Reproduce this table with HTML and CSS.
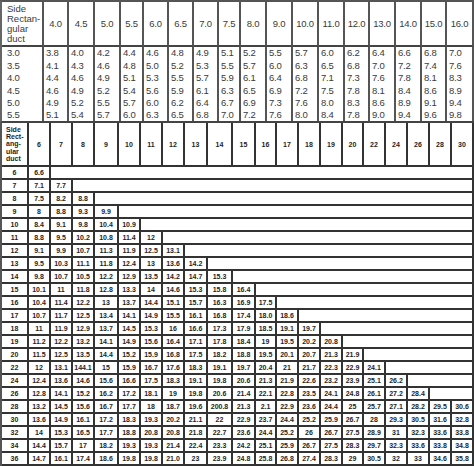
FILE: index.html
```html
<!DOCTYPE html>
<html>
<head>
<meta charset="utf-8">
<link rel="stylesheet" href="styles.css">
</head>
<body>
<div class="top">
  <div class="th lab">Side<br>Rectan-<br>gular<br>duct</div>
  <div class="th">4.0</div><div class="th">4.5</div><div class="th">5.0</div><div class="th">5.5</div><div class="th">6.0</div><div class="th">6.5</div><div class="th">7.0</div><div class="th">7.5</div><div class="th">8.0</div><div class="th">9.0</div><div class="th">10.0</div><div class="th">11.0</div><div class="th">12.0</div><div class="th">13.0</div><div class="th">14.0</div><div class="th">15.0</div><div class="th">16.0</div>

  <div class="td rl">3.0</div><div class="td">3.8</div><div class="td">4.0</div><div class="td">4.2</div><div class="td">4.4</div><div class="td">4.6</div><div class="td">4.8</div><div class="td">4.9</div><div class="td">5.1</div><div class="td">5.2</div><div class="td">5.5</div><div class="td">5.7</div><div class="td">6.0</div><div class="td">6.2</div><div class="td">6.4</div><div class="td">6.6</div><div class="td">6.8</div><div class="td">7.0</div>
  <div class="td rl">3.5</div><div class="td">4.1</div><div class="td">4.3</div><div class="td">4.6</div><div class="td">4.8</div><div class="td">5.0</div><div class="td">5.2</div><div class="td">5.3</div><div class="td">5.5</div><div class="td">5.7</div><div class="td">6.0</div><div class="td">6.3</div><div class="td">6.5</div><div class="td">6.8</div><div class="td">7.0</div><div class="td">7.2</div><div class="td">7.4</div><div class="td">7.6</div>
  <div class="td rl">4.0</div><div class="td">4.4</div><div class="td">4.6</div><div class="td">4.9</div><div class="td">5.1</div><div class="td">5.3</div><div class="td">5.5</div><div class="td">5.7</div><div class="td">5.9</div><div class="td">6.1</div><div class="td">6.4</div><div class="td">6.8</div><div class="td">7.1</div><div class="td">7.3</div><div class="td">7.6</div><div class="td">7.8</div><div class="td">8.1</div><div class="td">8.3</div>
  <div class="td rl">4.5</div><div class="td">4.6</div><div class="td">4.9</div><div class="td">5.2</div><div class="td">5.4</div><div class="td">5.6</div><div class="td">5.9</div><div class="td">6.1</div><div class="td">6.3</div><div class="td">6.5</div><div class="td">6.9</div><div class="td">7.2</div><div class="td">7.5</div><div class="td">7.8</div><div class="td">8.1</div><div class="td">8.4</div><div class="td">8.6</div><div class="td">8.9</div>
  <div class="td rl">5.0</div><div class="td">4.9</div><div class="td">5.2</div><div class="td">5.5</div><div class="td">5.7</div><div class="td">6.0</div><div class="td">6.2</div><div class="td">6.4</div><div class="td">6.7</div><div class="td">6.9</div><div class="td">7.3</div><div class="td">7.6</div><div class="td">8.0</div><div class="td">8.3</div><div class="td">8.6</div><div class="td">8.9</div><div class="td">9.1</div><div class="td">9.4</div>
  <div class="td rl">5.5</div><div class="td">5.1</div><div class="td">5.4</div><div class="td">5.7</div><div class="td">6.0</div><div class="td">6.3</div><div class="td">6.5</div><div class="td">6.8</div><div class="td">7.0</div><div class="td">7.2</div><div class="td">7.6</div><div class="td">8.0</div><div class="td">8.4</div><div class="td">7.8</div><div class="td">9.0</div><div class="td">9.4</div><div class="td">9.6</div><div class="td">9.8</div>
</div>

<div class="bot">
  <div class="bh lab">Side<br>Rect-<br>ang-<br>ular<br>duct</div>
  <div class="bh">6</div><div class="bh">7</div><div class="bh">8</div><div class="bh">9</div><div class="bh">10</div><div class="bh">11</div><div class="bh">12</div><div class="bh">13</div><div class="bh">14</div><div class="bh">15</div><div class="bh">16</div><div class="bh">17</div><div class="bh">18</div><div class="bh">19</div><div class="bh">20</div><div class="bh">22</div><div class="bh">24</div><div class="bh">26</div><div class="bh">28</div><div class="bh">30</div>

  <div class="b">6</div><div class="b">6.6</div><div class="b sp19"></div>
  <div class="b">7</div><div class="b">7.1</div><div class="b">7.7</div><div class="b sp18"></div>
  <div class="b">8</div><div class="b">7.5</div><div class="b">8.2</div><div class="b">8.8</div><div class="b sp17"></div>
  <div class="b">9</div><div class="b">8</div><div class="b">8.8</div><div class="b">9.3</div><div class="b">9.9</div><div class="b sp16"></div>
  <div class="b">10</div><div class="b">8.4</div><div class="b">9.1</div><div class="b">9.8</div><div class="b">10.4</div><div class="b">10.9</div><div class="b sp15"></div>
  <div class="b">11</div><div class="b">8.8</div><div class="b">9.5</div><div class="b">10.2</div><div class="b">10.8</div><div class="b">11.4</div><div class="b">12</div><div class="b sp14"></div>
  <div class="b">12</div><div class="b">9.1</div><div class="b">9.9</div><div class="b">10.7</div><div class="b">11.3</div><div class="b">11.9</div><div class="b">12.5</div><div class="b">13.1</div><div class="b sp13"></div>
  <div class="b">13</div><div class="b">9.5</div><div class="b">10.3</div><div class="b">11.1</div><div class="b">11.8</div><div class="b">12.4</div><div class="b">13</div><div class="b">13.6</div><div class="b">14.2</div><div class="b sp12"></div>
  <div class="b">14</div><div class="b">9.8</div><div class="b">10.7</div><div class="b">10.5</div><div class="b">12.2</div><div class="b">12.9</div><div class="b">13.5</div><div class="b">14.2</div><div class="b">14.7</div><div class="b">15.3</div><div class="b sp11"></div>
  <div class="b">15</div><div class="b">10.1</div><div class="b">11</div><div class="b">11.8</div><div class="b">12.8</div><div class="b">13.3</div><div class="b">14</div><div class="b">14.6</div><div class="b">15.3</div><div class="b">15.8</div><div class="b">16.4</div><div class="b sp10"></div>
  <div class="b">16</div><div class="b">10.4</div><div class="b">11.4</div><div class="b">12.2</div><div class="b">13</div><div class="b">13.7</div><div class="b">14.4</div><div class="b">15.1</div><div class="b">15.7</div><div class="b">16.3</div><div class="b">16.9</div><div class="b">17.5</div><div class="b sp9"></div>
  <div class="b">17</div><div class="b">10.7</div><div class="b">11.7</div><div class="b">12.5</div><div class="b">13.4</div><div class="b">14.1</div><div class="b">14.9</div><div class="b">15.5</div><div class="b">16.1</div><div class="b">16.8</div><div class="b">17.4</div><div class="b">18.0</div><div class="b">18.6</div><div class="b sp8"></div>
  <div class="b">18</div><div class="b">11</div><div class="b">11.9</div><div class="b">12.9</div><div class="b">13.7</div><div class="b">14.5</div><div class="b">15.3</div><div class="b">16</div><div class="b">16.6</div><div class="b">17.3</div><div class="b">17.9</div><div class="b">18.5</div><div class="b">19.1</div><div class="b">19.7</div><div class="b sp7"></div>
  <div class="b">19</div><div class="b">11.2</div><div class="b">12.2</div><div class="b">13.2</div><div class="b">14.1</div><div class="b">14.9</div><div class="b">15.6</div><div class="b">16.4</div><div class="b">17.1</div><div class="b">17.8</div><div class="b">18.4</div><div class="b">19</div><div class="b">19.5</div><div class="b">20.2</div><div class="b">20.8</div><div class="b sp6"></div>
  <div class="b">20</div><div class="b">11.5</div><div class="b">12.5</div><div class="b">13.5</div><div class="b">14.4</div><div class="b">15.2</div><div class="b">15.9</div><div class="b">16.8</div><div class="b">17.5</div><div class="b">18.2</div><div class="b">18.8</div><div class="b">19.5</div><div class="b">20.1</div><div class="b">20.7</div><div class="b">21.3</div><div class="b">21.9</div><div class="b sp5"></div>
  <div class="b">22</div><div class="b">12</div><div class="b">13.1</div><div class="b">144.1</div><div class="b">15</div><div class="b">15.9</div><div class="b">16.7</div><div class="b">17.6</div><div class="b">18.3</div><div class="b">19.1</div><div class="b">19.7</div><div class="b">20.4</div><div class="b">21</div><div class="b">21.7</div><div class="b">22.3</div><div class="b">22.9</div><div class="b">24.1</div><div class="b sp4"></div>
  <div class="b">24</div><div class="b">12.4</div><div class="b">13.6</div><div class="b">14.6</div><div class="b">15.6</div><div class="b">16.6</div><div class="b">17.5</div><div class="b">18.3</div><div class="b">19.1</div><div class="b">19.8</div><div class="b">20.6</div><div class="b">21.3</div><div class="b">21.9</div><div class="b">22.6</div><div class="b">23.2</div><div class="b">23.9</div><div class="b">25.1</div><div class="b">26.2</div><div class="b sp3"></div>
  <div class="b">26</div><div class="b">12.8</div><div class="b">14.1</div><div class="b">15.2</div><div class="b">16.2</div><div class="b">17.2</div><div class="b">18.1</div><div class="b">19</div><div class="b">19.8</div><div class="b">20.6</div><div class="b">21.4</div><div class="b">22.1</div><div class="b">22.8</div><div class="b">23.5</div><div class="b">24.1</div><div class="b">24.8</div><div class="b">26.1</div><div class="b">27.2</div><div class="b">28.4</div><div class="b sp2"></div>
  <div class="b">28</div><div class="b">13.2</div><div class="b">14.5</div><div class="b">15.6</div><div class="b">16.7</div><div class="b">17.7</div><div class="b">18</div><div class="b">18.7</div><div class="b">19.6</div><div class="b">200.8</div><div class="b">21.3</div><div class="b">2.1</div><div class="b">22.9</div><div class="b">23.6</div><div class="b">24.4</div><div class="b">25</div><div class="b">25.7</div><div class="b">27.1</div><div class="b">28.2</div><div class="b">29.5</div><div class="b">30.6</div>
  <div class="b">30</div><div class="b">13.6</div><div class="b">14.9</div><div class="b">16.1</div><div class="b">17.2</div><div class="b">18.3</div><div class="b">19.3</div><div class="b">20.2</div><div class="b">21.1</div><div class="b">22</div><div class="b">22.9</div><div class="b">23.7</div><div class="b">24.4</div><div class="b">25.2</div><div class="b">25.9</div><div class="b">26.7</div><div class="b">28</div><div class="b">29.3</div><div class="b">30.5</div><div class="b">31.6</div><div class="b">32.8</div>
  <div class="b">32</div><div class="b">14</div><div class="b">15.3</div><div class="b">16.5</div><div class="b">17.7</div><div class="b">18.8</div><div class="b">20.8</div><div class="b">20.8</div><div class="b">21.8</div><div class="b">22.7</div><div class="b">23.6</div><div class="b">24.4</div><div class="b">25.2</div><div class="b">26</div><div class="b">26.7</div><div class="b">27.5</div><div class="b">28.9</div><div class="b">31</div><div class="b">32.3</div><div class="b">33.6</div><div class="b">33.8</div>
  <div class="b">34</div><div class="b">14.4</div><div class="b">15.7</div><div class="b">17</div><div class="b">18.2</div><div class="b">19.3</div><div class="b">19.3</div><div class="b">21.4</div><div class="b">22.4</div><div class="b">23.3</div><div class="b">24.2</div><div class="b">25.1</div><div class="b">25.9</div><div class="b">26.7</div><div class="b">27.5</div><div class="b">28.3</div><div class="b">29.7</div><div class="b">32.3</div><div class="b">33.6</div><div class="b">33.8</div><div class="b">34.8</div>
  <div class="b">36</div><div class="b">14.7</div><div class="b">16.1</div><div class="b">17.4</div><div class="b">18.6</div><div class="b">19.8</div><div class="b">19.8</div><div class="b">21.0</div><div class="b">23</div><div class="b">23.9</div><div class="b">24.8</div><div class="b">25.8</div><div class="b">26.8</div><div class="b">27.4</div><div class="b">28.3</div><div class="b">29</div><div class="b">30.5</div><div class="b">32</div><div class="b">33</div><div class="b">34.6</div><div class="b">35.8</div>
</div>
</body>
</html>
```

FILE: styles.css
```css
* { box-sizing: border-box; }
html, body { margin: 0; padding: 0; background: #fff; }
body { width: 474px; height: 466px; overflow: hidden; font-family: "Liberation Sans", Arial, sans-serif; }

.top {
  display: grid;
  width: 474px;
  grid-template-columns: 42px 25px 26px 26px 23px 25px 25px 25px 22px 26px 26px 26px 26px 25px 26px 26px 25px 27px;
  grid-template-rows: 45px 12px 13px 12px 13px 12px 12px;
  border-top: 2px solid #555;
  border-left: 2px solid #666;
  border-bottom: 2px solid #444;
  color: #3a3a3a;
  font-size: 9.5px;
  letter-spacing: -0.2px;
}
.th {
  border-right: 2px solid #555;
  border-bottom: 2px solid #444;
  display: flex;
  align-items: center;
  justify-content: center;
  line-height: 10px;
}
.th.lab {
  justify-content: flex-start;
  padding-left: 5px;
  letter-spacing: 0;
}
.td {
  border-right: 2px solid #555;
  display: flex;
  align-items: center;
  padding-left: 2px;
  line-height: 10px;
}
.td.rl { padding-left: 5px; }

.bot {
  display: grid;
  width: 474px;
  grid-template-columns: 27px 22px 22px 22px 24px 22px 22px 22px 23px 25px 23px 21px 22px 22px 22px 21px 22px 22px 22px 22px 22px;
  grid-template-rows: 44px repeat(23, 13px);
  border-left: 2px solid #555;
  color: #1e1e1e;
  font-size: 7px;
  font-weight: bold;
}
.bh, .b {
  border-right: 2px solid #333;
  border-bottom: 2px solid #333;
  display: flex;
  align-items: center;
  justify-content: center;
  line-height: 7px;
}
.bh.lab {
  justify-content: flex-start;
  padding-left: 4px;
  line-height: 7.3px;
}
.sp19 { grid-column: span 19; }
.sp18 { grid-column: span 18; }
.sp17 { grid-column: span 17; }
.sp16 { grid-column: span 16; }
.sp15 { grid-column: span 15; }
.sp14 { grid-column: span 14; }
.sp13 { grid-column: span 13; }
.sp12 { grid-column: span 12; }
.sp11 { grid-column: span 11; }
.sp10 { grid-column: span 10; }
.sp9 { grid-column: span 9; }
.sp8 { grid-column: span 8; }
.sp7 { grid-column: span 7; }
.sp6 { grid-column: span 6; }
.sp5 { grid-column: span 5; }
.sp4 { grid-column: span 4; }
.sp3 { grid-column: span 3; }
.sp2 { grid-column: span 2; }
```
